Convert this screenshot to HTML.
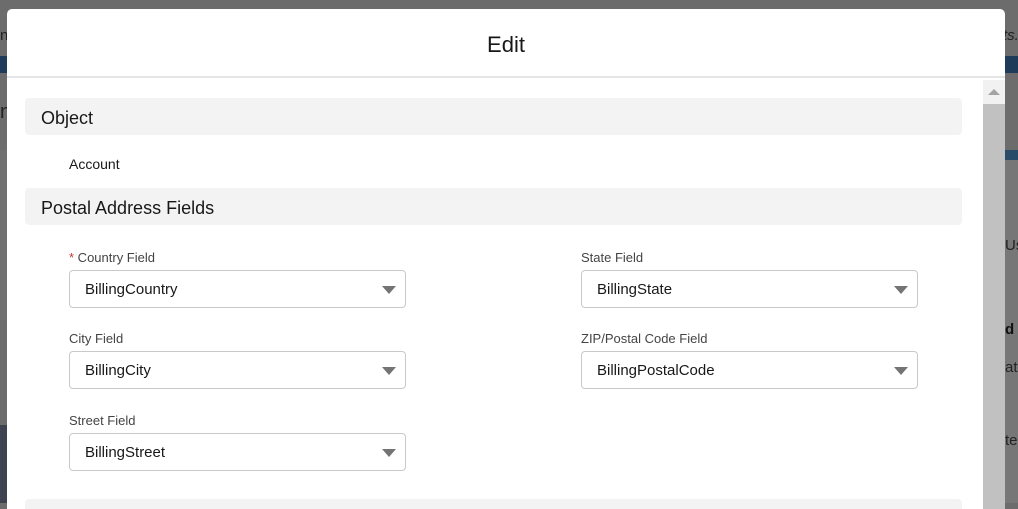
<!DOCTYPE html>
<html><head><meta charset="utf-8"><style>
*{margin:0;padding:0;box-sizing:border-box}
body{width:1018px;height:503px;overflow:hidden;background:#6c6c6c;font-family:"Liberation Sans",sans-serif;position:relative}
.bg{position:absolute}
.modal{position:absolute;left:7px;top:9px;width:998px;height:500px;background:#fff;border-radius:5px 5px 0 0;overflow:hidden}
.hdr{height:69px;border-bottom:2px solid #e5e5e5;text-align:center;font-size:22px;color:#181818;line-height:72px}
.sec{position:absolute;left:18px;width:937px;height:37px;background:#f3f3f3;border-radius:4px;font-size:18px;color:#181818;padding-left:16px;line-height:40px}
.txt{position:absolute;font-size:14px;color:#181818}
.lbl{position:absolute;font-size:13px;color:#444}
.sel{position:absolute;width:337px;height:38px;border:1px solid #c9c9c9;border-radius:4px;font-size:15px;color:#181818;padding-left:15px;line-height:38px}
.sel:after{content:"";position:absolute;right:9px;top:15px;border-left:7px solid transparent;border-right:7px solid transparent;border-top:8px solid #747474}
.sb{position:absolute;left:976px;top:71px;width:22px;height:430px;background:#f1f1f1}
.thumb{position:absolute;left:976px;top:95px;width:22px;height:410px;background:#c1c1c1}
.arr{position:absolute;left:981px;top:80px;border-left:6px solid transparent;border-right:6px solid transparent;border-bottom:6px solid #a3a3a3}
</style></head><body>
<div class="bg" style="left:0;top:56px;width:7px;height:17px;background:#1f3b5a"></div>
<div class="bg" style="left:1005px;top:56px;width:13px;height:17px;background:#1f3b5a"></div>
<div class="bg" style="left:0;top:150px;width:7px;height:170px;background:#707070"></div>
<div class="bg" style="left:0;top:425px;width:7px;height:78px;background:#3d4450"></div>
<div class="bg" style="left:1005px;top:150px;width:13px;height:10px;background:#2a4a6a"></div>
<div class="bg" style="left:1005px;top:160px;width:13px;height:343px;background:#777"></div>
<div class="bg" style="left:1005px;top:237px;font-size:15px;color:#222">Us</div>
<div class="bg" style="left:1005px;top:321px;font-size:15px;color:#111;font-weight:bold">d</div>
<div class="bg" style="left:1005px;top:359px;font-size:15px;color:#222">ato</div>
<div class="bg" style="left:1005px;top:432px;font-size:15px;color:#222">te</div>
<div class="bg" style="left:0;top:27px;font-size:15px;color:#222">n</div>
<div class="bg" style="left:1003px;top:27px;font-size:15px;color:#222;font-style:italic">ts.</div>
<div class="bg" style="left:0;top:101px;font-size:20px;color:#222">m</div>
<div class="modal">
<div class="hdr">Edit</div>
<div class="sec" style="top:89px">Object</div>
<div class="txt" style="left:62px;top:147px">Account</div>
<div class="sec" style="top:179px">Postal Address Fields</div>
<div class="lbl" style="left:62px;top:241px"><span style="color:#c23934">*</span> Country Field</div>
<div class="sel" style="left:62px;top:261px">BillingCountry</div>
<div class="lbl" style="left:574px;top:241px">State Field</div>
<div class="sel" style="left:574px;top:261px">BillingState</div>
<div class="lbl" style="left:62px;top:322px">City Field</div>
<div class="sel" style="left:62px;top:342px">BillingCity</div>
<div class="lbl" style="left:574px;top:322px">ZIP/Postal Code Field</div>
<div class="sel" style="left:574px;top:342px">BillingPostalCode</div>
<div class="lbl" style="left:62px;top:404px">Street Field</div>
<div class="sel" style="left:62px;top:424px">BillingStreet</div>
<div class="sec" style="top:490px;height:20px"></div>
<div class="sb"></div><div class="thumb"></div><div class="arr"></div>
</div>
</body></html>
